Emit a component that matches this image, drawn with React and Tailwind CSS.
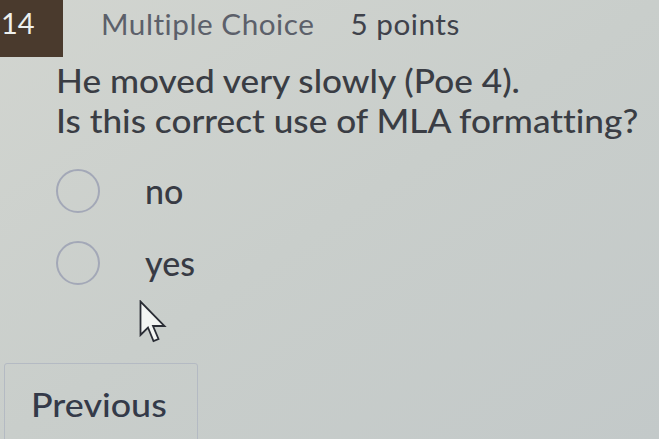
import { useState } from 'react';

const options = ['no', 'yes'];

const Cursor = () => (
  <svg width="28" height="44" viewBox="0 0 28 44" className="ml-[139px] mt-[15px]">
    <path
      d="M1.5 1.5 L1.5 35 L9 27.5 L14.5 41 L19.5 39 L14 26 L25.5 26 Z"
      fill="#f3f5f3"
      stroke="#2a2d35"
      strokeWidth="1.8"
      strokeLinejoin="miter"
    />
  </svg>
);

const App = () => {
  const [selected, setSelected] = useState(null);

  return (
    <div
      className="w-[659px] h-[439px] overflow-hidden bg-gradient-to-br from-[#d2d5d0] via-[#c9cecb] to-[#c3c9c9] text-[#3d4047] [font-variant-ligatures:none]"
      style={{ fontFamily: 'Lato, "Open Sans", sans-serif' }}
    >
      {/* Header */}
      <div className="flex items-start h-[57px]">
        <div className="w-[63px] h-[57px] shrink-0 bg-[#4a3a2d] text-[#eef0ee] text-[29px] leading-none pt-[8px] pl-[1px]">
          14
        </div>
        <div className="flex items-baseline pt-[10px] ml-[38px] text-[28px] leading-none tracking-[0.5px] scale-x-[1.06] origin-left">
          <span className="text-[#5c606a]">Multiple Choice</span>
          <span className="ml-[34px] text-[#3f424b]">5 points</span>
        </div>
      </div>

      {/* Question */}
      <div className="pl-[56px] pt-[4px] text-[32px] leading-[40px] font-medium text-[#3a3d44]">
        <div className="w-max scale-x-[1.1] origin-left">
          <p>He moved very slowly (Poe 4).</p>
          <p>Is this correct use of MLA formatting?</p>
        </div>
      </div>

      {/* Options */}
      <div className="mt-[28px] flex flex-col gap-[28px]">
        {options.map((opt) => (
          <button
            key={opt}
            onClick={() => setSelected(opt)}
            className="flex items-center text-left"
          >
            <span
              className={`ml-[56px] w-[44px] h-[44px] shrink-0 rounded-full border-2 border-[#a3a8b7] ${
                selected === opt ? 'bg-[#6a7080]' : ''
              }`}
            />
            <span className="ml-[45px] text-[34px] leading-none font-medium text-[#383b44]">{opt}</span>
          </button>
        ))}
      </div>

      <Cursor />

      {/* Footer */}
      <div className="mt-[19px] ml-[4px] w-[194px] h-[90px] border border-[#b4bac3] rounded-[3px] pt-[25px] pl-[26px] text-[32px] leading-none font-medium text-[#343a49]">
        <span className="inline-block scale-x-[1.12] origin-left">Previous</span>
      </div>
    </div>
  );
};

export default App;
